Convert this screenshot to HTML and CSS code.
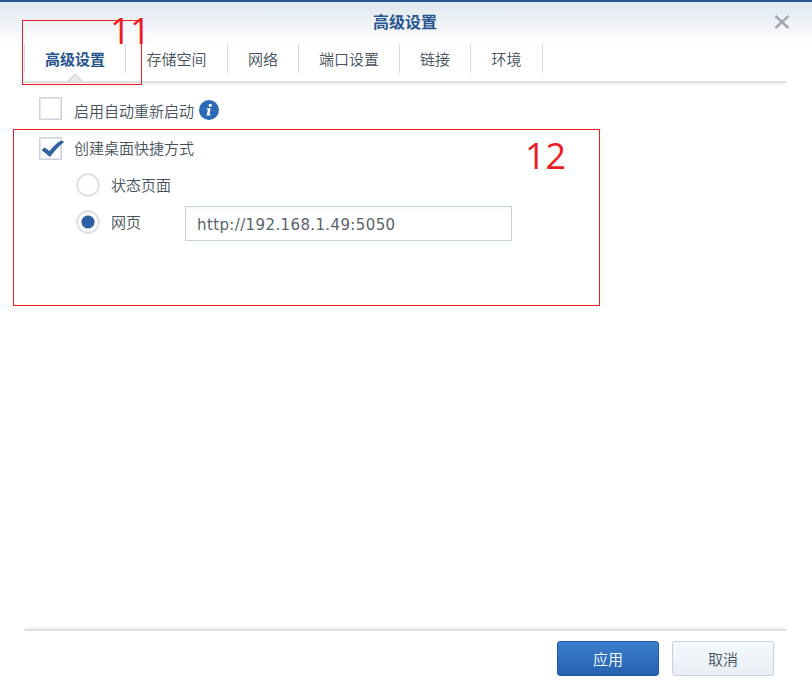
FILE: index.html
```html
<!DOCTYPE html>
<html lang="zh-CN">
<head>
<meta charset="utf-8">
<title>高级设置</title>
<link rel="stylesheet" href="styles.css">
</head>
<body>
<div class="dialog">
  <header class="titlebar">
    <h1 class="title">高级设置</h1>
    <svg class="close" width="16" height="14" viewBox="0 0 16 14"><path d="M1.5 1 14.500 13M14.500 1 1.500 13" fill="none" stroke="#a3a9ae" stroke-width="2.500"/></svg>
  </header>
  <nav class="tabs">
    <span class="tab active">高级设置<svg class="notch" width="16" height="8" viewBox="0 0 16 8"><path d="M0 8 8 0 16 8Z" fill="#dcdee0"/><path d="M3 8 8 2.500 13 8Z" fill="#ebecee"/></svg></span>
    <span class="tab">存储空间</span>
    <span class="tab short">网络</span>
    <span class="tab">端口设置</span>
    <span class="tab short">链接</span>
    <span class="tab short last">环境</span>
  </nav>
  <main class="form">
    <div class="row restart">
      <span class="checkbox"></span>
      <span class="label">启用自动重新启动</span>
      <svg class="info" width="20" height="20" viewBox="0 0 20 20"><circle cx="10" cy="10" r="10" fill="#2b68b5"/><circle cx="11.300" cy="5.300" r="1.600" fill="#fff"/><path d="M7.800 8.300H11.700L10.400 14.200H11.700L11.400 15.500H7.500L8.900 9.600H7.500Z" fill="#fff"/></svg>
    </div>
    <div class="row shortcut">
      <span class="checkbox"><svg class="check" width="24" height="18" viewBox="0 0 24 18"><path d="M1.500 10 4.500 7.500 9.500 11C13 6.500 17 2.500 20.500 1H23.500V2.500C18.500 6.500 13.500 12 10 17Z" fill="#2f639f"/></svg></span>
      <span class="label">创建桌面快捷方式</span>
    </div>
    <div class="row option">
      <span class="radio"></span>
      <span class="label">状态页面</span>
    </div>
    <div class="row option web">
      <span class="radio selected"></span>
      <span class="label">网页</span>
      <span class="field">http://192.168.1.49:5050</span>
    </div>
  </main>
  <footer class="footer">
    <span class="button primary">应用</span>
    <span class="button">取消</span>
  </footer>
</div>
<div class="mark mark-tab"></div>
<div class="number number-tab">11</div>
<div class="mark mark-form"></div>
<div class="number number-form">12</div>
</body>
</html>
```
FILE: styles.css
```css
* { box-sizing: border-box; }
body {
  margin: 0;
  background: #fff;
  color: #46515c;
  font: 350 15px/20px "Noto Sans CJK SC", sans-serif;
}
svg { display: block; }
.dialog {
  width: 812px;
  height: 684px;
  display: flex;
  flex-direction: column;
  border-top: 2px solid #2b578f;
  background: linear-gradient(#e0e7ef, #fff 42px);
}
.titlebar {
  position: relative;
  height: 42px;
  display: flex;
  justify-content: center;
  padding: 9px 2px 0 0;
}
.title { margin: 0; font-size: 16px; line-height: 20px; font-weight: 700; color: #28558f; }
.close { position: absolute; right: 22px; top: 13px; }
.tabs {
  height: 39px;
  flex: none;
  margin: 0 25px 0 24px;
  display: flex;
  border-bottom: 2px solid #dfe0e1;
  box-shadow: 0 3px 3px -1px #f0f1f1;
}
.tab {
  position: relative;
  width: 101px;
  height: 29px;
  display: flex;
  justify-content: center;
  padding-top: 5px;
  border-right: 1px solid #d3dce8;
}
.tab.active { width: 102px; border-left: 1px solid #d3dce8; color: #28558f; font-weight: 700; }
.tab:nth-child(2) { width: 102px; }
.tab.short { width: 71px; }
.tab.last { width: 72px; }
.notch { position: absolute; left: 42px; bottom: -8px; }
.form { flex: 1; padding: 14px 39px 0; }
.row { display: flex; align-items: center; }
.restart { height: 23px; }
.restart .label { padding-top: 4px; }
.shortcut { height: 23px; margin-top: 17px; }
.shortcut .label { margin-top: -2px; }
.checkbox { position: relative; width: 23px; height: 23px; border: 1px solid #cbd3dc; box-shadow: inset 0 0 0 1px #e3e7ec; background: #fff; margin-right: 12px; }
.check { position: absolute; left: 0; top: 2px; }
.info { margin: 2px 0 0 5px; }
.option { height: 24px; padding-left: 37px; margin-top: 13px; }
.radio { width: 24px; height: 24px; border: 1px solid #dde1e7; box-shadow: inset 0 0 0 1px #d6dbe2; border-radius: 50%; margin-right: 11px; background: #fff; }
.radio.selected { background: radial-gradient(circle, #2b61a2 6px, #fff 7px); }
.web { height: 35px; margin-top: 9px; }
.web .radio { margin-top: -3px; }
.web .label { width: 74px; margin-top: -3px; }
.field {
  width: 327px;
  height: 35px;
  padding: 8px 11px;
  border: 1px solid #c7d1dc;
  box-shadow: inset 0 2px 1px #f7f8f8;
  background: #fff;
  color: #59626a;
  font-family: "DejaVu Sans", sans-serif;
  font-weight: 400;
  letter-spacing: 0.38px;
  white-space: nowrap;
}
.footer {
  height: 55px;
  flex: none;
  margin: 0 25px 0 24px;
  display: flex;
  justify-content: flex-end;
  gap: 13px;
  padding: 10px 13px 0 0;
  border-top: 2px solid #dfe0e1;
  box-shadow: 0 -3px 3px -1px #f0f1f1;
}
.button {
  width: 102px;
  height: 35px;
  border: 1px solid #c6d0da;
  border-radius: 3px;
  background: linear-gradient(#f5faff, #e9eef2);
  text-align: center;
  line-height: 33px;
}
.primary { border-color: #2059a2; background: linear-gradient(#3c7fcd, #2561b0); color: #fff; }
.mark { position: absolute; border: 1px solid #ed1c24; }
.mark-tab { left: 22px; top: 20px; width: 120px; height: 65px; }
.mark-form { left: 13px; top: 129px; width: 587px; height: 177px; }
.number { position: absolute; color: #ed1c24; font: 36px/40px "Open Sans", "Noto Sans", sans-serif; }
.number-tab { left: 110px; top: 11px; letter-spacing: -0.5px; }
.number-form { left: 525px; top: 136px; }
```
